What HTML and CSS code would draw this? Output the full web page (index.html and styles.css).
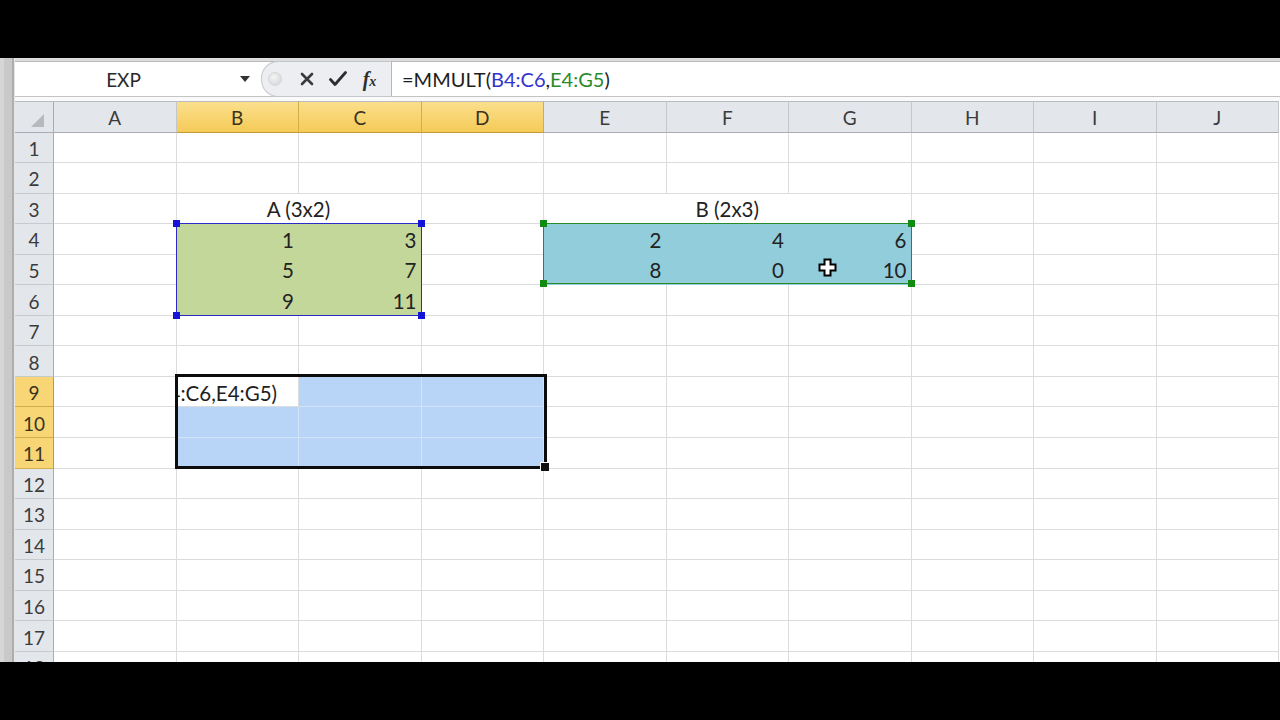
FILE: index.html
```html
<!DOCTYPE html>
<html>
<head>
<meta charset="utf-8">
<link rel="stylesheet" href="styles.css">
</head>
<body>
<div class="screen">
  <div class="topblack"></div>
  <div class="app">
    <div class="leftstrip"></div>
    <div class="main">
      <div class="topband"></div>
      <div class="fbar">
        <div class="namebox">
          <div class="nb-text">EXP</div>
          <div class="nb-arrow"><svg width="10" height="6" viewBox="0 0 10 6"><path d="M0 0 H10 L5 6 Z" fill="#333"/></svg></div>
        </div>
        <div class="fbtns">
          <div class="fb"><span class="circ"></span></div>
          <div class="fb"><svg width="14" height="14" viewBox="0 0 14 14"><path d="M2 2 L12 12 M12 2 L2 12" stroke="#3a3a3a" stroke-width="2.6" stroke-linecap="round"/></svg></div>
          <div class="fb"><svg width="18" height="16" viewBox="0 0 18 16"><path d="M1.5 8.5 L6 13.5 L16.5 1.5" fill="none" stroke="#2e2e2e" stroke-width="2.8" stroke-linejoin="round" stroke-linecap="round"/></svg></div>
          <div class="fb fx"><span class="fx-f">f</span><span class="fx-x">x</span></div>
        </div>
        <div class="formula">=MMULT(<span class="rb">B4:C6</span>,<span class="rg">E4:G5</span>)</div>
      </div>
      <div class="gap"></div>
      <div class="sheet">
        <div class="ch corner"><span class="tri"></span></div>
        <div class="ch">A</div><div class="ch hs">B</div><div class="ch hs">C</div><div class="ch hs">D</div><div class="ch">E</div><div class="ch">F</div><div class="ch">G</div><div class="ch">H</div><div class="ch">I</div><div class="ch">J</div>

        <div class="rh">1</div><div class="c"></div><div class="c"></div><div class="c"></div><div class="c"></div><div class="c"></div><div class="c"></div><div class="c"></div><div class="c"></div><div class="c"></div><div class="c"></div>
        <div class="rh">2</div><div class="c"></div><div class="c"></div><div class="c"></div><div class="c"></div><div class="c"></div><div class="c"></div><div class="c"></div><div class="c"></div><div class="c"></div><div class="c"></div>
        <div class="rh">3</div><div class="c"></div><div class="c t span2">A (3x2)</div><div class="c"></div><div class="c t span3">B (2x3)</div><div class="c"></div><div class="c"></div><div class="c"></div>
        <div class="rh">4</div><div class="c"></div><div class="c n g">1</div><div class="c n g">3</div><div class="c"></div><div class="c n b">2</div><div class="c n b">4</div><div class="c n b">6</div><div class="c"></div><div class="c"></div><div class="c"></div>
        <div class="rh">5</div><div class="c"></div><div class="c n g">5</div><div class="c n g">7</div><div class="c"></div><div class="c n b">8</div><div class="c n b">0</div><div class="c n b">10</div><div class="c"></div><div class="c"></div><div class="c"></div>
        <div class="rh">6</div><div class="c"></div><div class="c n g">9</div><div class="c n g">11</div><div class="c"></div><div class="c"></div><div class="c"></div><div class="c"></div><div class="c"></div><div class="c"></div><div class="c"></div>
        <div class="rh">7</div><div class="c"></div><div class="c"></div><div class="c"></div><div class="c"></div><div class="c"></div><div class="c"></div><div class="c"></div><div class="c"></div><div class="c"></div><div class="c"></div>
        <div class="rh">8</div><div class="c"></div><div class="c"></div><div class="c"></div><div class="c"></div><div class="c"></div><div class="c"></div><div class="c"></div><div class="c"></div><div class="c"></div><div class="c"></div>
        <div class="rh hs">9</div><div class="c"></div><div class="c edit"><span class="edit-text">=MMULT(B4:C6,E4:G5)</span></div><div class="c s"></div><div class="c s"></div><div class="c"></div><div class="c"></div><div class="c"></div><div class="c"></div><div class="c"></div><div class="c"></div>
        <div class="rh hs">10</div><div class="c"></div><div class="c s"></div><div class="c s"></div><div class="c s"></div><div class="c"></div><div class="c"></div><div class="c"></div><div class="c"></div><div class="c"></div><div class="c"></div>
        <div class="rh hs">11</div><div class="c"></div><div class="c s"></div><div class="c s"></div><div class="c s"></div><div class="c"></div><div class="c"></div><div class="c"></div><div class="c"></div><div class="c"></div><div class="c"></div>
        <div class="rh">12</div><div class="c"></div><div class="c"></div><div class="c"></div><div class="c"></div><div class="c"></div><div class="c"></div><div class="c"></div><div class="c"></div><div class="c"></div><div class="c"></div>
        <div class="rh">13</div><div class="c"></div><div class="c"></div><div class="c"></div><div class="c"></div><div class="c"></div><div class="c"></div><div class="c"></div><div class="c"></div><div class="c"></div><div class="c"></div>
        <div class="rh">14</div><div class="c"></div><div class="c"></div><div class="c"></div><div class="c"></div><div class="c"></div><div class="c"></div><div class="c"></div><div class="c"></div><div class="c"></div><div class="c"></div>
        <div class="rh">15</div><div class="c"></div><div class="c"></div><div class="c"></div><div class="c"></div><div class="c"></div><div class="c"></div><div class="c"></div><div class="c"></div><div class="c"></div><div class="c"></div>
        <div class="rh">16</div><div class="c"></div><div class="c"></div><div class="c"></div><div class="c"></div><div class="c"></div><div class="c"></div><div class="c"></div><div class="c"></div><div class="c"></div><div class="c"></div>
        <div class="rh">17</div><div class="c"></div><div class="c"></div><div class="c"></div><div class="c"></div><div class="c"></div><div class="c"></div><div class="c"></div><div class="c"></div><div class="c"></div><div class="c"></div>
        <div class="rh">18</div><div class="c"></div><div class="c"></div><div class="c"></div><div class="c"></div><div class="c"></div><div class="c"></div><div class="c"></div><div class="c"></div><div class="c"></div><div class="c"></div>

        <div class="range range-a">
          <span class="h tl"></span><span class="h tr"></span><span class="h bl"></span><span class="h br"></span>
        </div>
        <div class="range range-b">
          <span class="h tl"></span><span class="h tr"></span><span class="h bl"></span><span class="h br"></span>
        </div>
        <div class="selbox"><span class="fill-handle"></span></div>
        <svg class="cursor" width="19" height="19" viewBox="0 0 19 19"><path d="M6.5 1.5 H12.5 V6.5 H17.5 V12.5 H12.5 V17.5 H6.5 V12.5 H1.5 V6.5 H6.5 Z" fill="#fff" stroke="#000" stroke-width="2" stroke-linejoin="miter"/></svg>
      </div>
    </div>
  </div>
  <div class="bottomblack"></div>
</div>
</body>
</html>
```
FILE: styles.css
```css
html, body {
  margin: 0;
  padding: 0;
  background: #000;
}
body {
  font-family: Lato, "Liberation Sans", sans-serif;
  color: #222;
}
.screen {
  width: 1280px;
  height: 720px;
  display: flex;
  flex-direction: column;
  overflow: hidden;
}
.topblack {
  height: 58px;
  background: #000;
  flex: none;
}
.bottomblack {
  flex: 1;
  background: #000;
}
.app {
  height: 604px;
  flex: none;
  display: flex;
  overflow: hidden;
  background: #fff;
}
.leftstrip {
  width: 12px;
  flex: none;
  background: linear-gradient(to right, #d6d6d6 0, #d6d6d6 4px, #c9c9c9 4px, #c9c9c9 12px);
  border-right: 2px solid #adadad;
  box-shadow: 1px 0 0 #e6e6e6;
  margin-right: 1px;
}
.main {
  flex: 1;
  display: flex;
  flex-direction: column;
  min-width: 0;
}
.topband {
  height: 3px;
  background: #dcdcdc;
  flex: none;
}
.fbar {
  height: 34px;
  flex: none;
  display: flex;
  border-top: 1px solid #b9b9b9;
  border-bottom: 1px solid #c3c3c3;
  background: #fff;
}
.namebox {
  width: 243px;
  display: flex;
  align-items: center;
}
.nb-text {
  flex: 1;
  text-align: center;
  font-size: 19px;
  color: #2a2a2a;
}
.nb-arrow {
  width: 26px;
  display: flex;
  justify-content: center;
  align-items: center;
}
.fbtns {
  width: 126px;
  margin-left: 3px;
  background: #eceef1;
  border: 1px solid #c4c7cb;
  border-right: 0;
  border-radius: 17px 0 0 17px;
  display: flex;
  align-items: center;
  gap: 11.5px;
  padding-left: 3px;
  margin-top: -1px;
  margin-bottom: -1px;
}
.fb {
  width: 20px;
  height: 20px;
  display: flex;
  align-items: center;
  justify-content: center;
}
.circ {
  width: 12px;
  height: 12px;
  border-radius: 50%;
  background: radial-gradient(circle at 40% 35%, #f4f4f4, #cfd1d4);
  border: 1px solid #d3d5d8;
}
.fx {
  font-family: "Liberation Serif", "DejaVu Serif", serif;
  font-style: italic;
  font-weight: bold;
  color: #2e2e2e;
}
.fx-f {
  font-size: 20px;
}
.fx-x {
  font-size: 14px;
  margin-top: 5px;
}
.formula {
  flex: 1;
  border-left: 1px solid #b4b7bb;
  padding-left: 10px;
  font-size: 20px;
  line-height: 34px;
  color: #1e1e1e;
  white-space: nowrap;
}
.rb { color: #3333cc; }
.rg { color: #2a8a2a; }
.gap {
  height: 4px;
  flex: none;
  background: #fafafa;
}
.sheet {
  position: relative;
  display: grid;
  grid-template-columns: 39px repeat(10, 122.5px);
  grid-template-rows: 31.5px repeat(18, 30.56px);
  font-size: 19px;
}
.ch {
  background: #e3e7ec;
  border-top: 1px solid #b8bcc1;
  border-right: 1px solid #c3c7cc;
  border-bottom: 1px solid #a9adb3;
  box-sizing: border-box;
  display: flex;
  align-items: center;
  justify-content: center;
  padding-top: 2px;
  color: #3b3b3b;
}
.corner {
  justify-content: flex-end;
  align-items: flex-end;
  padding: 0 9px 5px 0;
  border-right-color: #a9adb3;
}
.tri {
  width: 0;
  height: 0;
  border-left: 13px solid transparent;
  border-bottom: 13px solid #b6babf;
}
.ch.hs {
  background: linear-gradient(#fadf8c, #f5cb58);
  border-right-color: #d2ad4a;
  border-bottom-color: #c29a35;
  color: #3a3320;
}
.rh {
  background: #e3e7ec;
  border-right: 1px solid #a9adb3;
  border-bottom: 1px solid #c6cacf;
  box-sizing: border-box;
  display: flex;
  align-items: center;
  justify-content: center;
  padding-top: 2px;
  color: #3b3b3b;
}
.rh.hs {
  background: #f8d676;
  border-bottom-color: #d1ad4c;
  border-right-color: #c29a35;
  color: #3a3320;
}
.c {
  border-right: 1px solid #dadcdd;
  border-bottom: 1px solid #dadcdd;
  box-sizing: border-box;
  display: flex;
  align-items: center;
  padding-top: 2px;
  min-width: 0;
  overflow: hidden;
  white-space: nowrap;
  font-size: 20.5px;
}
.t {
  justify-content: center;
  color: #222;
}
.span2 { grid-column: span 2; }
.span3 { grid-column: span 3; }
.n {
  justify-content: flex-end;
  padding-right: 4px;
  color: #222;
}
.g {
  background: #c4d79b;
  border-color: #c4d79b;
}
.b {
  background: #92cddc;
  border-color: #92cddc;
}
.s {
  background: #b8d5f8;
  border-color: #d3e3f7;
}
.edit {
  background: #fff;
  justify-content: flex-end;
  padding-right: 21px;
}
.edit-text {
  flex: none;
  color: #1e1e1e;
}
.range {
  position: absolute;
  box-sizing: border-box;
}
.range-a {
  left: 160.5px;
  top: 122.2px;
  width: 246px;
  height: 92.7px;
  border: 1.5px solid #2b2bc8;
}
.range-b {
  left: 528px;
  top: 122.2px;
  width: 368.5px;
  height: 61px;
  border: 1.5px solid #2a8a2a;
}
.h {
  position: absolute;
  width: 7px;
  height: 7px;
}
.range-a .h { background: #1414d8; }
.range-b .h { background: #108a10; }
.tl { left: -4px; top: -4px; }
.tr { right: -4px; top: -4px; }
.bl { left: -4px; bottom: -4px; }
.br { right: -4px; bottom: -4px; }
.selbox {
  position: absolute;
  left: 160px;
  top: 273px;
  width: 372px;
  height: 95px;
  box-sizing: border-box;
  border: 3.5px solid #0c0c0c;
}
.fill-handle {
  position: absolute;
  right: -5px;
  bottom: -5px;
  width: 8px;
  height: 8px;
  background: #111;
  border-left: 1px solid #fff;
  border-top: 1px solid #fff;
}
.cursor {
  position: absolute;
  left: 803px;
  top: 157px;
}
```
